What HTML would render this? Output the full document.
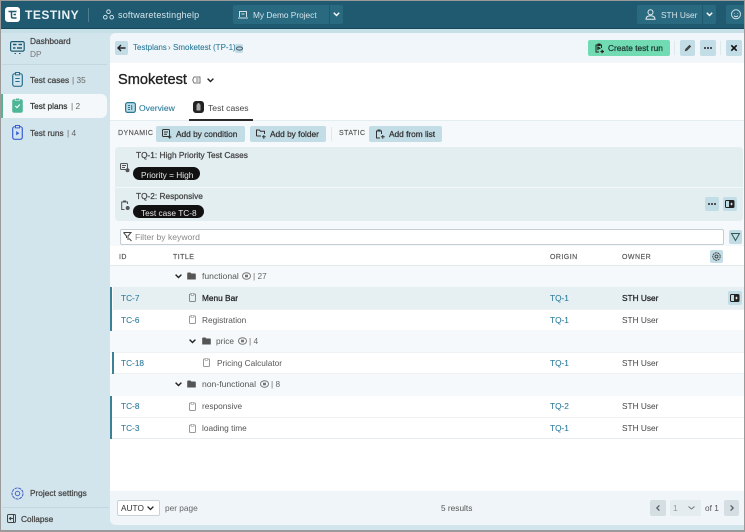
<!DOCTYPE html>
<html><head><meta charset="utf-8"><style>
html,body{margin:0;padding:0}
body{width:745px;height:532px;overflow:hidden;position:relative;background:#d3e5ec;font-family:"Liberation Sans",sans-serif;font-size:8.3px;color:#333}
.a,.t,.b,svg{position:absolute}
.t{white-space:nowrap;line-height:12px;height:12px;letter-spacing:0}
.b{background:#c3dde6;border-radius:2px}
.g{color:#666}
.l{color:#2e7c9b;-webkit-text-stroke:.1px #2e7c9b}
.m{-webkit-text-stroke:.25px currentColor}
.h{font-size:7px;color:#555;letter-spacing:.45px;-webkit-text-stroke:.15px #555}
svg{fill:none;stroke:#444;stroke-width:1;overflow:visible}
</style></head><body>
<!-- frame -->
<div class="a" style="left:0;top:0;width:745px;height:532px;box-sizing:border-box;border:1px solid #9a9a9a;border-bottom-width:2px;z-index:50;pointer-events:none"></div>
<!-- top bar -->
<div class="a" style="left:0;top:1px;width:745px;height:27px;background:#1f5a70;border-bottom:1px solid #154759"></div>
<div class="a" style="left:5px;top:7px;width:15px;height:15px;background:#fff;border-radius:3px"></div>
<svg style="left:5px;top:7px" width="15" height="15"><path d="M3.5 4.5H11.5M6.5 4.5V9.5Q6.5 11 8 11H11.5M8.5 7.5H11" stroke="#1f5a70" stroke-width="1.5"/></svg>
<div class="t" style="left:25px;top:7px;height:16px;line-height:16px;font-size:12px;font-weight:bold;color:#e8f2f5;letter-spacing:.5px">TESTINY</div>
<div class="a" style="left:88px;top:8px;width:1px;height:14px;background:#4d7f92"></div>
<svg style="left:103px;top:9px" width="11" height="11"><circle cx="5.5" cy="2.7" r="1.8" stroke="#cfe0e6"/><circle cx="2.3" cy="8.2" r="1.8" stroke="#cfe0e6"/><circle cx="8.7" cy="8.2" r="1.8" stroke="#cfe0e6"/></svg>
<div class="t" style="left:118px;top:9px;color:#d5e4ea;font-size:9px;letter-spacing:.2px">softwaretestinghelp</div>
<div class="a" style="left:233px;top:5px;width:110px;height:19px;background:#2a6a81;border-radius:2px"></div>
<div class="a" style="left:329px;top:5px;width:1px;height:19px;background:#1f5a70"></div>
<svg style="left:238px;top:10px" width="10" height="9"><path d="M1.5 7V1.5H8.5V7M0 8H10M3.5 4H6.5" stroke="#cfe0e6"/></svg>
<div class="t" style="left:253px;top:9px;color:#d5e4ea">My Demo Project</div>
<svg style="left:333px;top:12px" width="7" height="5"><path d="M.8 .8L3.5 3.5L6.2 .8" stroke="#fff" stroke-width="1.4"/></svg>
<div class="a" style="left:637px;top:5px;width:79px;height:19px;background:#2a6a81;border-radius:2px"></div>
<div class="a" style="left:702px;top:5px;width:1px;height:19px;background:#1f5a70"></div>
<svg style="left:645px;top:9px" width="11" height="11"><circle cx="5.5" cy="3.2" r="2.5" stroke="#e3edf0"/><path d="M1 10.3C1 7.5 3 6.8 5.5 6.8S10 7.5 10 10.3Z" stroke="#e3edf0"/></svg>
<div class="t" style="left:661px;top:9px;color:#d5e4ea">STH User</div>
<svg style="left:706px;top:12px" width="7" height="5"><path d="M.8 .8L3.5 3.5L6.2 .8" stroke="#fff" stroke-width="1.4"/></svg>
<div class="a" style="left:726px;top:5px;width:19px;height:19px;background:#2a6a81;border-radius:2px"></div>
<svg style="left:731px;top:9px" width="11" height="11"><circle cx="5" cy="5.3" r="4.5" stroke="#cfe0e6"/><path d="M3 6.8Q5 8.4 7 6.8M3.3 4V4.6M6.7 4V4.6" stroke="#cfe0e6"/></svg>
<div class="a" style="left:0;top:29px;width:745px;height:4px;background:#c7dfe7"></div>
<!-- sidebar -->
<svg style="left:10px;top:41px" width="15" height="14"><rect x=".6" y=".6" width="13.6" height="9.5" rx="1.5" stroke="#1f5a70" stroke-width="1.2"/><path d="M3 3.5H6.5M8.5 3.5H12M3 7H5.5M7 7H12" stroke="#1f5a70" stroke-width="1.4"/><path d="M4.5 12.5H6M9 12.5H10.5" stroke="#1f5a70"/></svg>
<div class="t m" style="left:30px;top:35px;color:#444">Dashboard</div>
<div class="t" style="left:30px;top:48px;color:#777">DP</div>
<div class="a" style="left:2px;top:64px;width:105px;height:1px;background:#c2d7df"></div>
<svg style="left:12px;top:72px" width="11" height="15"><rect x=".7" y="1.7" width="9.6" height="12.6" rx="2" stroke="#2a6f8c" stroke-width="1.2"/><rect x="3.5" y=".5" width="4" height="2.4" fill="#d3e5ec" stroke="#2a6f8c"/><path d="M3.3 6.5H7.7M3.3 9.5H7.7" stroke="#2a6f8c"/></svg>
<div class="t m" style="left:30px;top:74px;color:#444">Test cases</div><div class="t g" style="left:72px;top:74px">| 35</div>
<div class="a" style="left:1px;top:94px;width:106px;height:24px;background:#f4f8fa;border-radius:0 6px 6px 0"></div>
<div class="a" style="left:1px;top:94px;width:2px;height:24px;background:#57b394"></div>
<svg style="left:12px;top:98px" width="11" height="15"><rect x=".2" y="1.2" width="10.6" height="13.6" rx="2" fill="#4fb597" stroke="none"/><rect x="3.5" y=".3" width="4" height="2.4" fill="#4fb597" stroke="#f4f8fa" stroke-width=".5"/><path d="M3.3 8L5 9.6L7.8 6.5" stroke="#fff" stroke-width="1.1"/></svg>
<div class="t m" style="left:30px;top:100px;color:#333">Test plans</div><div class="t g" style="left:71px;top:100px">| 2</div>
<svg style="left:12px;top:125px" width="11" height="15"><rect x=".7" y="1.7" width="9.6" height="12.6" rx="2" stroke="#3a5fd4" stroke-width="1.2"/><rect x="3.5" y=".5" width="4" height="2.4" fill="#d3e5ec" stroke="#3a5fd4"/><path d="M4.2 6L7.4 8.2L4.2 10.4Z" fill="#3a5fd4" stroke="none"/></svg>
<div class="t m" style="left:30px;top:127px;color:#444">Test runs</div><div class="t g" style="left:67px;top:127px">| 4</div>
<svg style="left:11px;top:487px" width="13" height="13"><circle cx="6.5" cy="6.5" r="5.5" stroke="#4a65c8" stroke-width="1.1" stroke-dasharray="3 .8"/><circle cx="6.5" cy="6.5" r="2.2" stroke="#4a65c8"/></svg>
<div class="t m" style="left:30px;top:487px;color:#444">Project settings</div>
<div class="a" style="left:2px;top:507px;width:107px;height:1px;background:#c2d7df"></div>
<svg style="left:7px;top:514px" width="10" height="10"><rect x=".5" y=".5" width="8" height="8" rx="1.2" stroke="#444"/><path d="M2 4.5H6.5M4 3L2.4 4.5L4 6M6.5 .5V8.5" stroke="#444"/></svg>
<div class="t m" style="left:21px;top:513px;color:#444">Collapse</div>
<!-- main panel -->
<div class="a" style="left:110px;top:33px;width:634px;height:492px;background:#fff;border-radius:6px 0 0 6px;overflow:hidden">
  <div class="a" style="left:0;top:0;width:634px;height:30px;background:#f0f6f9"></div>
  <div class="a" style="left:0;top:87px;width:634px;height:1px;background:#e4edf0"></div>
  <div class="a" style="left:0;top:88px;width:634px;height:125px;background:#f6f9fb"></div>
  <div class="a" style="left:0;top:458px;width:634px;height:34px;background:#eff5f8"></div>
</div>
<div class="a" style="left:110px;top:525px;width:634px;height:5px;background:#d3e5ec"></div>
<!-- breadcrumb -->
<div class="b" style="left:115px;top:41px;width:13px;height:14px"></div>
<svg style="left:117px;top:44px" width="9" height="8"><path d="M8.5 4H1M4 1L1 4L4 7" stroke="#222" stroke-width="1.4"/></svg>
<div class="t l" style="left:133px;top:42px;font-size:8px">Testplans</div>
<div class="t g" style="left:168px;top:42px;font-size:8px">›</div>
<div class="t l" style="left:173px;top:42px;font-size:8px">Smoketest (TP-1)</div>
<div class="b" style="left:235px;top:44px;width:8px;height:9px"></div>
<svg style="left:236px;top:46px" width="7" height="5"><ellipse cx="3.5" cy="2.5" rx="3" ry="1.6" stroke="#456"/></svg>
<!-- right header buttons -->
<div class="a" style="left:588px;top:40px;width:82px;height:16px;background:#71dcb3;border-radius:2px"></div>
<svg style="left:595px;top:43px" width="9" height="10"><path d="M6.5 5V2H1V9H4M3 1H5V2.5H3ZM2.8 4L5 5.2L2.8 6.4Z" stroke="#222"/><path d="M5.5 8.5H9M7.2 6.7V10.2" stroke="#222" stroke-width="1.2"/></svg>
<div class="t m" style="left:608px;top:42px;color:#1d3a33">Create test run</div>
<div class="a" style="left:674px;top:41px;width:1px;height:14px;background:#dfe8eb"></div>
<div class="b" style="left:680px;top:40px;width:15px;height:16px"></div>
<svg style="left:684px;top:44px" width="8" height="8"><path d="M.8 7.2L1.3 5L5.5 .8L7.2 2.5L3 6.7Z" fill="#444" stroke="none"/></svg>
<div class="b" style="left:700px;top:40px;width:16px;height:16px"></div>
<svg style="left:704px;top:47px" width="8" height="2"><path d="M0 1H2M3 1H5M6 1H8" stroke="#222" stroke-width="1.5"/></svg>
<div class="a" style="left:720px;top:41px;width:1px;height:14px;background:#dfe8eb"></div>
<div class="b" style="left:726px;top:40px;width:16px;height:16px"></div>
<svg style="left:731px;top:45px" width="6" height="6"><path d="M.3 .3L5.7 5.7M5.7 .3L.3 5.7" stroke="#111" stroke-width="1.6"/></svg>
<!-- title -->
<div class="t" style="left:118px;top:71px;height:18px;line-height:18px;font-size:14.6px;color:#222;-webkit-text-stroke:.35px #222">Smoketest</div>
<svg style="left:192px;top:76px" width="9" height="8"><path d="M2 1H8V7H2L.7 4Z" stroke="#777"/><path d="M4 3H6.5M4 5H6.5" stroke="#777"/></svg>
<svg style="left:207px;top:78px" width="7" height="5"><path d="M.6 .6L3.5 3.5L6.4 .6" stroke="#222" stroke-width="1.4"/></svg>
<!-- tabs -->
<svg style="left:125px;top:102px" width="11" height="11"><rect x=".6" y=".6" width="9.8" height="9.8" rx="2" fill="#b9dbe6" stroke="#2a7796" stroke-width="1.2"/><path d="M3 3.5H5M3 5.5H5M3 7.5H5M6.7 3V8" stroke="#2a7796"/></svg>
<div class="t l" style="left:139px;top:102px;font-size:8.6px">Overview</div>
<div class="a" style="left:193px;top:101px;width:11px;height:12px;background:#222;border-radius:3px"></div>
<svg style="left:196px;top:103px" width="5" height="8"><rect x=".5" y="1.5" width="4" height="6" fill="#aaa" stroke="none"/><rect x="1.5" y=".3" width="2" height="1.5" fill="#ccc" stroke="none"/></svg>
<div class="t" style="left:208px;top:102px;color:#444;font-size:8.6px">Test cases</div>
<div class="a" style="left:189px;top:119px;width:64px;height:2px;background:#2a2a2a"></div>
<!-- add row -->
<div class="t h" style="left:118px;top:128px">DYNAMIC</div>
<div class="b" style="left:156px;top:126px;width:89px;height:16px"></div>
<svg style="left:162px;top:129px" width="9" height="10"><rect x=".5" y=".5" width="7" height="7" rx="1" stroke="#333"/><path d="M2 3H6M2 5.2H5M6 8H9.5M7.7 6.3V9.8" stroke="#333"/></svg>
<div class="t m" style="left:176px;top:128px;color:#333">Add by condition</div>
<div class="b" style="left:250px;top:126px;width:76px;height:16px"></div>
<svg style="left:256px;top:129px" width="10" height="10"><path d="M.5 7V1H3.5L4.5 2.2H8.5V5M.5 7H5" stroke="#333"/><path d="M6 7.8H9.7M7.8 6V9.7" stroke="#333"/></svg>
<div class="t m" style="left:270px;top:128px;color:#333">Add by folder</div>
<div class="a" style="left:331px;top:127px;width:1px;height:14px;background:#e0e8ec"></div>
<div class="t h" style="left:339px;top:128px">STATIC</div>
<div class="b" style="left:369px;top:126px;width:73px;height:16px"></div>
<svg style="left:376px;top:129px" width="9" height="10"><path d="M5.5 5V2H.5V9H4M2 2V1H4V2" stroke="#333"/><path d="M5 7.8H8.7M6.8 6V9.7" stroke="#333"/></svg>
<div class="t m" style="left:389px;top:128px;color:#333">Add from list</div>
<!-- queries -->
<div class="a" style="left:115px;top:147px;width:628px;height:74px;background:#e3eef1;border-radius:4px"></div>
<div class="a" style="left:115px;top:187px;width:628px;height:1px;background:#f2f7f9"></div>
<svg style="left:120px;top:163px" width="10" height="10"><rect x=".5" y=".5" width="7" height="6" rx="1" stroke="#555"/><path d="M2 2.5H6M2 4.5H5" stroke="#555"/><circle cx="7.5" cy="7.3" r="2" fill="#555" stroke="none"/></svg>
<div class="t m" style="left:136px;top:149px;color:#444">TQ-1: High Priority Test Cases</div>
<div class="a" style="left:133px;top:167px;width:67px;height:13px;border-radius:7px;background:#111"></div>
<div class="t" style="left:141px;top:168.5px;color:#e8e8e8;font-size:8.3px">Priority = High</div>
<svg style="left:121px;top:200px" width="9" height="11"><path d="M6.5 4V2H.7V9.5H3.5M2.5 2V1H4.7V2" stroke="#555"/><circle cx="6.7" cy="8" r="2" fill="#555" stroke="none"/></svg>
<div class="t m" style="left:136px;top:190px;color:#444">TQ-2: Responsive</div>
<div class="a" style="left:133px;top:205px;width:71px;height:13px;border-radius:7px;background:#111"></div>
<div class="t" style="left:141px;top:206.5px;color:#e8e8e8;font-size:8.3px">Test case TC-8</div>
<div class="b" style="left:705px;top:197px;width:14px;height:14px"></div>
<svg style="left:708px;top:203px" width="8" height="2"><path d="M0 1H2M3 1H5M6 1H8" stroke="#222" stroke-width="1.5"/></svg>
<div class="b" style="left:723px;top:197px;width:14px;height:14px"></div>
<svg style="left:725px;top:200px" width="10" height="8"><rect x=".5" y=".5" width="8.5" height="7" rx="1" stroke="#222"/><rect x="4" y=".5" width="5" height="7" rx="1" fill="#222" stroke="none"/><path d="M5.3 4H7.7M6.5 2.8V5.2" stroke="#fff" stroke-width=".8"/></svg>
<!-- filter -->
<div class="a" style="left:120px;top:229px;width:604px;height:16px;box-sizing:border-box;background:#fff;border:1px solid #c4cdd1;border-radius:2px"></div>
<svg style="left:123px;top:232px" width="9" height="10"><path d="M.5 .5H8L5 4V8M.5 .5L3.5 4V6" stroke="#444"/><path d="M6 6.5L8.5 9" stroke="#444"/></svg>
<div class="t" style="left:135px;top:231px;color:#888;font-size:8.6px">Filter by keyword</div>
<div class="b" style="left:729px;top:230px;width:13px;height:14px"></div>
<svg style="left:731px;top:233px" width="9" height="8"><path d="M.5 .5H8.5L4.5 7.5Z" stroke="#355"/></svg>
<!-- table header -->
<div class="t h" style="left:119px;top:252px">ID</div>
<div class="t h" style="left:173px;top:252px">TITLE</div>
<div class="t h" style="left:550px;top:252px">ORIGIN</div>
<div class="t h" style="left:622px;top:252px">OWNER</div>
<div class="b" style="left:710px;top:250px;width:13px;height:13px"></div>
<svg style="left:712px;top:252px" width="9" height="9"><circle cx="4.5" cy="4.5" r="3.7" stroke="#444" stroke-dasharray="2 .6"/><circle cx="4.5" cy="4.5" r="1.5" stroke="#444"/></svg>
<div class="a" style="left:110px;top:265px;width:634px;height:1px;background:#e4e9eb"></div>
<!-- rows -->
<div class="a" style="left:110px;top:266px;width:634px;height:21px;background:#f6f9fb"></div>
<div class="a" style="left:113px;top:287px;width:631px;height:22px;background:#e6f0f3"></div>
<div class="a" style="left:110px;top:330px;width:634px;height:22px;background:#f6f9fb"></div>
<div class="a" style="left:110px;top:374px;width:634px;height:22px;background:#f6f9fb"></div>
<div class="a" style="left:110px;top:309px;width:634px;height:1px;background:#eef2f4"></div>
<div class="a" style="left:110px;top:352px;width:634px;height:1px;background:#eef2f4"></div>
<div class="a" style="left:110px;top:373px;width:634px;height:1px;background:#eef2f4"></div>
<div class="a" style="left:110px;top:417px;width:634px;height:1px;background:#eef2f4"></div>
<div class="a" style="left:110px;top:438px;width:634px;height:1px;background:#e6ecef"></div>
<div class="a" style="left:110px;top:287px;width:2px;height:44px;background:#3d8197"></div>
<div class="a" style="left:112px;top:352px;width:2px;height:22px;background:#3d8197"></div>
<div class="a" style="left:110px;top:396px;width:2px;height:43px;background:#3d8197"></div>
<!-- functional -->
<svg style="left:175px;top:274px" width="7" height="5"><path d="M.6 .6L3.5 3.5L6.4 .6" stroke="#222" stroke-width="1.4"/></svg>
<svg style="left:187px;top:272px" width="9" height="8"><path d="M.2 1.5Q.2 .5 1 .5H3.5L4.3 1.5H8Q8.8 1.5 8.8 2.3V7.5H.2Z" fill="#555" stroke="none"/></svg>
<div class="t" style="left:202px;top:270px;color:#555;font-size:8.6px">functional</div>
<svg style="left:242px;top:272px" width="9" height="8"><ellipse cx="4.5" cy="4" rx="4" ry="3.3" stroke="#777"/><rect x="3" y="2.7" width="3" height="2.6" fill="#777" stroke="none"/></svg>
<div class="t g" style="left:253px;top:270px">| 27</div>
<!-- TC-7 -->
<div class="t l" style="left:121px;top:292px">TC-7</div>
<svg style="left:189px;top:293px" width="7" height="9"><rect x=".5" y="1" width="6" height="7.5" rx="1" stroke="#888"/><rect x="2.2" y=".3" width="2.6" height="2" fill="#fff" stroke="#888" stroke-width=".6"/></svg>
<div class="t m" style="left:202px;top:292px;color:#222">Menu Bar</div>
<div class="t l" style="left:550px;top:292px">TQ-1</div>
<div class="t m" style="left:622px;top:292px;color:#222">STH User</div>
<div class="b" style="left:728px;top:291px;width:14px;height:14px"></div>
<svg style="left:730px;top:294px" width="10" height="8"><rect x=".5" y=".5" width="8.5" height="7" rx="1" stroke="#222"/><rect x="4" y=".5" width="5" height="7" rx="1" fill="#222" stroke="none"/><path d="M5.3 4H7.7M6.5 2.8V5.2" stroke="#fff" stroke-width=".8"/></svg>
<!-- TC-6 -->
<div class="t l" style="left:121px;top:314px">TC-6</div>
<svg style="left:189px;top:315px" width="7" height="9"><rect x=".5" y="1" width="6" height="7.5" rx="1" stroke="#999"/><rect x="2.2" y=".3" width="2.6" height="2" fill="#fff" stroke="#999" stroke-width=".6"/></svg>
<div class="t" style="left:202px;top:314px;color:#555">Registration</div>
<div class="t l" style="left:550px;top:314px">TQ-1</div>
<div class="t" style="left:622px;top:314px;color:#444">STH User</div>
<!-- price -->
<svg style="left:189px;top:339px" width="7" height="5"><path d="M.6 .6L3.5 3.5L6.4 .6" stroke="#222" stroke-width="1.4"/></svg>
<svg style="left:202px;top:337px" width="9" height="8"><path d="M.2 1.5Q.2 .5 1 .5H3.5L4.3 1.5H8Q8.8 1.5 8.8 2.3V7.5H.2Z" fill="#555" stroke="none"/></svg>
<div class="t" style="left:216px;top:335px;color:#555">price</div>
<svg style="left:238px;top:337px" width="9" height="8"><ellipse cx="4.5" cy="4" rx="4" ry="3.3" stroke="#777"/><rect x="3" y="2.7" width="3" height="2.6" fill="#777" stroke="none"/></svg>
<div class="t g" style="left:249px;top:335px">| 4</div>
<!-- TC-18 -->
<div class="t l" style="left:121px;top:357px">TC-18</div>
<svg style="left:203px;top:358px" width="7" height="9"><rect x=".5" y="1" width="6" height="7.5" rx="1" stroke="#999"/><rect x="2.2" y=".3" width="2.6" height="2" fill="#fff" stroke="#999" stroke-width=".6"/></svg>
<div class="t" style="left:217px;top:357px;color:#555">Pricing Calculator</div>
<div class="t l" style="left:550px;top:357px">TQ-1</div>
<div class="t" style="left:622px;top:357px;color:#444">STH User</div>
<!-- non-functional -->
<svg style="left:175px;top:382px" width="7" height="5"><path d="M.6 .6L3.5 3.5L6.4 .6" stroke="#222" stroke-width="1.4"/></svg>
<svg style="left:187px;top:380px" width="9" height="8"><path d="M.2 1.5Q.2 .5 1 .5H3.5L4.3 1.5H8Q8.8 1.5 8.8 2.3V7.5H.2Z" fill="#555" stroke="none"/></svg>
<div class="t" style="left:202px;top:378px;color:#555;font-size:8.6px">non-functional</div>
<svg style="left:260px;top:380px" width="9" height="8"><ellipse cx="4.5" cy="4" rx="4" ry="3.3" stroke="#777"/><rect x="3" y="2.7" width="3" height="2.6" fill="#777" stroke="none"/></svg>
<div class="t g" style="left:271px;top:378px">| 8</div>
<!-- TC-8 -->
<div class="t l" style="left:121px;top:400px">TC-8</div>
<svg style="left:189px;top:402px" width="7" height="9"><rect x=".5" y="1" width="6" height="7.5" rx="1" stroke="#999"/><rect x="2.2" y=".3" width="2.6" height="2" fill="#fff" stroke="#999" stroke-width=".6"/></svg>
<div class="t" style="left:202px;top:400px;color:#555">responsive</div>
<div class="t l" style="left:550px;top:400px">TQ-2</div>
<div class="t" style="left:622px;top:400px;color:#444">STH User</div>
<!-- TC-3 -->
<div class="t l" style="left:121px;top:422px">TC-3</div>
<svg style="left:189px;top:424px" width="7" height="9"><rect x=".5" y="1" width="6" height="7.5" rx="1" stroke="#999"/><rect x="2.2" y=".3" width="2.6" height="2" fill="#fff" stroke="#999" stroke-width=".6"/></svg>
<div class="t" style="left:202px;top:422px;color:#555">loading time</div>
<div class="t l" style="left:550px;top:422px">TQ-1</div>
<div class="t" style="left:622px;top:422px;color:#444">STH User</div>
<!-- footer -->
<div class="a" style="left:117px;top:500px;width:43px;height:16px;box-sizing:border-box;background:#fff;border:1px solid #c9d2d6;border-radius:2px"></div>
<div class="t" style="left:121px;top:502px;color:#333">AUTO</div>
<svg style="left:147px;top:506px" width="7" height="5"><path d="M.6 .6L3.5 3.5L6.4 .6" stroke="#222" stroke-width="1.3"/></svg>
<div class="t" style="left:165px;top:502px;color:#666">per page</div>
<div class="t" style="left:441px;top:502px;color:#555">5 results</div>
<div class="a" style="left:650px;top:500px;width:16px;height:16px;background:#d5dfe3;border-radius:2px"></div>
<svg style="left:656px;top:505px" width="4" height="6"><path d="M3.4 .4L.8 3L3.4 5.6" stroke="#556" stroke-width="1.2"/></svg>
<div class="a" style="left:670px;top:500px;width:31px;height:16px;background:#e4ecef;border-radius:2px"></div>
<div class="t" style="left:673px;top:502px;color:#999">1</div>
<svg style="left:688px;top:506px" width="7" height="4"><path d="M.5 .5L3.5 3L6.5 .5" stroke="#777"/></svg>
<div class="t" style="left:705px;top:502px;color:#555">of 1</div>
<div class="a" style="left:724px;top:500px;width:15px;height:16px;background:#d5dfe3;border-radius:2px"></div>
<svg style="left:730px;top:505px" width="4" height="6"><path d="M.6 .4L3.2 3L.6 5.6" stroke="#556" stroke-width="1.2"/></svg>
</body></html>
